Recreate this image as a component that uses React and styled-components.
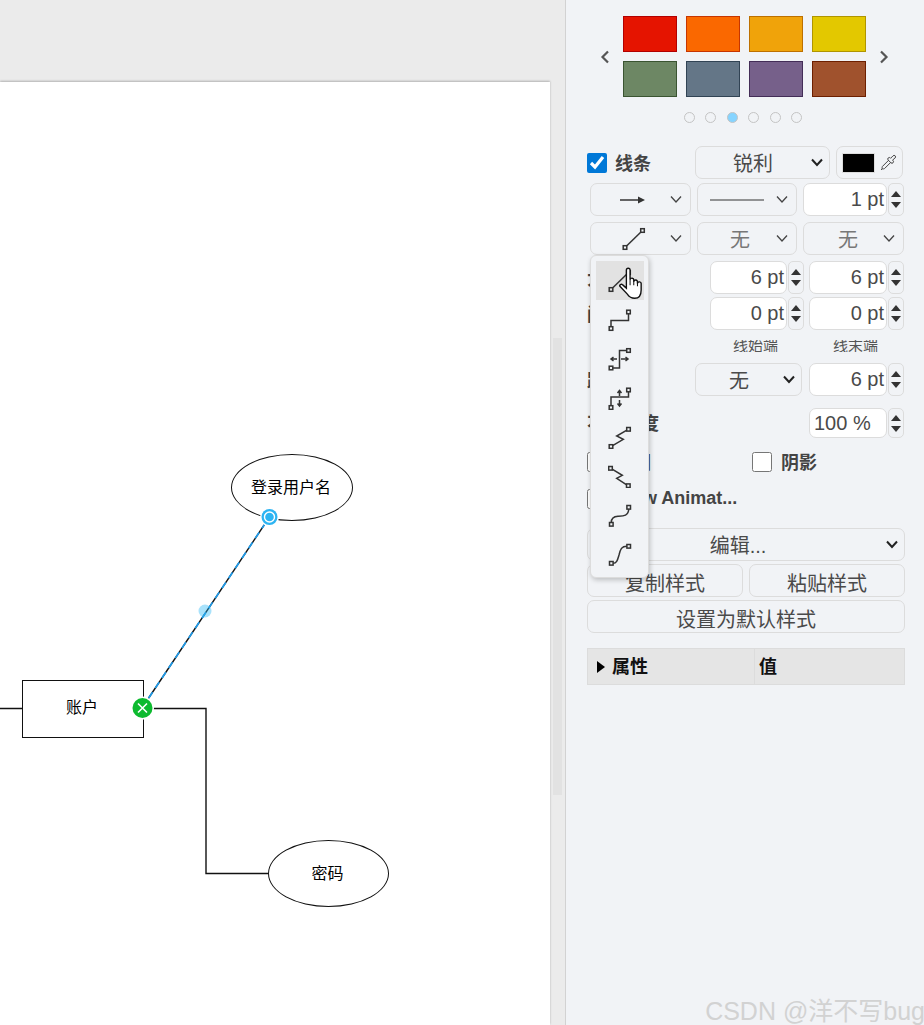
import React from 'react';
import styled, { createGlobalStyle } from 'styled-components';
import { Pipette } from 'lucide-react';

const GlobalStyle = createGlobalStyle`
  html, body {
    margin: 0;
    padding: 0;
    height: 100%;
    overflow: hidden;
    font-family: "Liberation Sans", "Noto Sans CJK SC", sans-serif;
  }
  #root { height: 100%; }
`;

const AppShell = styled.div`
  display: flex;
  width: 924px;
  height: 1025px;
  position: relative;
  overflow: hidden;
`;

/* left side: grey workspace + white page */
const Workspace = styled.div`
  position: relative;
  width: 566px;
  flex-shrink: 0;
  box-sizing: border-box;
  padding-top: 82px;
  padding-right: 15px;
  background: #ebebeb;
  border-right: 1px solid #d2d2d2;
`;

const Page = styled.div`
  position: relative;
  height: 943px;
  background: #fff;
  box-shadow: 0 -1px 2px rgba(0, 0, 0, 0.25);
`;

const ScrollThumb = styled.div`
  position: absolute;
  top: 338px;
  right: 3px;
  width: 9px;
  height: 457px;
  background: #e2e2e2;
`;

const Connectors = styled.svg`
  position: absolute;
  inset: 0;
  width: 550px;
  height: 943px;
`;

const Node = styled.div`
  position: absolute;
  box-sizing: border-box;
  left: ${p => p.$x}px;
  top: ${p => p.$y}px;
  width: ${p => p.$w}px;
  height: ${p => p.$h}px;
  padding: 0 2px ${p => (p.$round ? 4 : 6)}px 0;
  border: 1.5px solid #111;
  border-radius: ${p => (p.$round ? '50%' : '0')};
  background: #fff;
  display: flex;
  align-items: center;
  justify-content: center;
  font-size: 16px;
  color: #000;
`;

const Overlay = styled.svg`
  position: absolute;
  inset: 0;
  width: 550px;
  height: 943px;
`;

/* right side: format panel */
const Panel = styled.div`
  position: relative;
  flex: 1;
  box-sizing: border-box;
  padding: 16px 19px 0 21px;
  background: #f1f3f6;
  color: #4a4a4a;
  display: flex;
  flex-direction: column;
`;

const PaletteRow = styled.div`
  display: flex;
  align-items: center;
  justify-content: center;
  gap: 11px;
  margin-left: -4px;
`;

const NavButton = styled.svg`
  width: 14px;
  height: 16px;
  fill: none;
  stroke: #555;
  stroke-width: 2.2;
`;

const SwatchGrid = styled.div`
  display: grid;
  grid-template-columns: repeat(4, 54px);
  grid-auto-rows: 36px;
  gap: 9px;
`;

const Swatch = styled.div`
  box-sizing: border-box;
  background: ${p => p.$fill};
  border: 1px solid ${p => p.$line};
`;

const Dots = styled.div`
  display: flex;
  justify-content: center;
  gap: 10.6px;
  margin: 15px 6px 0 0;
`;

const Dot = styled.div`
  box-sizing: border-box;
  width: 11px;
  height: 11px;
  border-radius: 50%;
  border: 1px solid #c4c4c4;
  background: ${p => (p.$active ? '#86d4ff' : 'transparent')};
`;

const Row = styled.div`
  display: flex;
  align-items: center;
  gap: ${p => p.$gap ?? 6}px;
  height: ${p => p.$h ?? 33}px;
  margin-top: ${p => p.$mt}px;
  padding-left: ${p => p.$pl ?? 0}px;
  padding-right: ${p => p.$pr ?? 0}px;
`;

const Check = styled.input.attrs({ type: 'checkbox' })`
  width: 20px;
  height: 20px;
  margin: 0;
  flex-shrink: 0;
  accent-color: #0078d7;
`;

const BoldLabel = styled.span`
  font-size: 18px;
  font-weight: 700;
  color: #444;
  white-space: nowrap;
  padding-bottom: 2px;
  margin-left: ${p => p.$ml ?? 0}px;
  margin-right: ${p => p.$mr ?? 0}px;
`;

const RowLabel = styled(BoldLabel)`
  flex: 1;
`;

const Select = styled.div`
  box-sizing: border-box;
  width: ${p => (p.$w ? `${p.$w}px` : 'auto')};
  flex: ${p => (p.$w ? '0 0 auto' : '1')};
  height: 33px;
  display: flex;
  align-items: center;
  padding: 0 ${p => (p.$tight ? 5 : 7)}px 0 ${p => p.$shift ?? 0}px;
  border: 1px solid #dcdcdc;
  border-radius: 7px;
  font-size: 20px;
  color: ${p => (p.$dim ? '#777' : '#4a4a4a')};
`;

const SelectValue = styled.div`
  flex: 1;
  display: flex;
  align-items: center;
  justify-content: center;
`;

const Chevron = styled.svg`
  width: 14px;
  height: 9px;
  flex-shrink: 0;
  fill: none;
  stroke: ${p => (p.$bold ? '#222' : '#444')};
  stroke-width: ${p => (p.$bold ? 2 : 1.3)};
`;

const ColorButton = styled.div`
  box-sizing: border-box;
  width: 67px;
  height: 33px;
  margin-left: 6px;
  display: flex;
  align-items: center;
  gap: 5px;
  padding-left: 5px;
  border: 1px solid #dcdcdc;
  border-radius: 7px;
  color: #444;
`;

const ColorChip = styled.div`
  box-sizing: border-box;
  width: 33px;
  height: 20px;
  background: #000;
  border: 1px solid #ddd;
`;

const NumberField = styled.div`
  display: flex;
  height: ${p => p.$h ?? 33}px;
  gap: 1px;
  width: ${p => p.$w ?? 95}px;
`;

const NumberInput = styled.div`
  box-sizing: border-box;
  flex: 1;
  display: flex;
  align-items: center;
  justify-content: ${p => (p.$left ? 'flex-start' : 'flex-end')};
  padding: 0 2px 0 4px;
  background: #fff;
  border: 1px solid #dcdcdc;
  border-radius: 7px;
  font-size: 20px;
  color: #4a4a4a;
`;

const Spinner = styled.div`
  box-sizing: border-box;
  width: 16px;
  display: flex;
  flex-direction: column;
  align-items: center;
  justify-content: center;
  gap: 5px;
  border: 1px solid #dcdcdc;
  border-radius: 5px;
`;

const SpinArrow = styled.div`
  width: 0;
  height: 0;
  border-left: 5.5px solid transparent;
  border-right: 5.5px solid transparent;
  ${p => (p.$down ? 'border-top: 6px solid #333;' : 'border-bottom: 6px solid #333;')}
`;

const Caption = styled.div`
  width: 95px;
  height: 12px;
  line-height: 12px;
  overflow: hidden;
  font-size: 15px;
  text-align: center;
  padding-right: 2px;
  box-sizing: border-box;
  color: #555;
`;

const Spacer = styled.div`
  flex: 1;
`;

const WideButton = styled.div`
  box-sizing: border-box;
  flex: 1;
  height: 33px;
  display: flex;
  align-items: center;
  justify-content: center;
  border: 1px solid #dcdcdc;
  border-radius: 7px;
  font-size: 20px;
  padding-top: 3px;
  color: #4a4a4a;
`;

const TableHead = styled.div`
  display: grid;
  grid-template-columns: 166px 1fr;
  height: 37px;
  margin-top: 15px;
  box-sizing: border-box;
  background: #e5e5e5;
  border: 1px solid #dcdcdc;
  font-size: 18px;
  font-weight: 700;
  color: #111;
`;

const HeadCell = styled.div`
  display: flex;
  align-items: center;
  gap: 7px;
  padding-left: ${p => p.$pl}px;
  padding-bottom: 3px;
  border-left: ${p => (p.$divided ? '1px solid #dcdcdc' : 'none')};
`;

const Caret = styled.div`
  width: 0;
  height: 0;
  margin-top: 3px;
  border-top: 6px solid transparent;
  border-bottom: 6px solid transparent;
  border-left: 8px solid #000;
`;

/* edge style popup */
const Popup = styled.div`
  position: absolute;
  left: 24px;
  top: 255px;
  width: 59px;
  height: 323px;
  box-sizing: border-box;
  padding: 5px 5px;
  background: #f1f3f6;
  border: 1px solid #dcdcdc;
  border-radius: 6px;
  box-shadow: 1px 2px 5px rgba(0, 0, 0, 0.22);
`;

const PopupItem = styled.div`
  height: 39px;
  width: 48px;
  display: flex;
  align-items: center;
  justify-content: center;
  background: ${p => (p.$hover ? '#e2e2e2' : 'transparent')};
`;

const EdgeIcon = styled.svg`
  width: 24px;
  height: 24px;
  fill: none;
  stroke: #333;
  stroke-width: 1.5;
`;

const HandCursor = styled.svg`
  position: absolute;
  left: 28px;
  top: 10px;
  width: 24px;
  height: 35px;
`;

const Watermark = styled.div`
  position: absolute;
  right: -1px;
  bottom: 0;
  font-size: 25px;
  line-height: 28px;
  color: #d2d2d2;
  white-space: nowrap;
`;

const swatches = [
  ['#e51400', '#b20000'],
  ['#fa6800', '#c73500'],
  ['#f0a30a', '#bd7000'],
  ['#e3c800', '#b09500'],
  ['#6d8764', '#3a5431'],
  ['#647687', '#314354'],
  ['#76608a', '#432d57'],
  ['#a0522d', '#6d1f00'],
];

const Ends = ({ a, b }) => (
  <>
    <rect x={a[0] - 1.8} y={a[1] - 1.8} width="3.6" height="3.6" />
    <rect x={b[0] - 1.8} y={b[1] - 1.8} width="3.6" height="3.6" />
  </>
);

const Arrows = ({ vertical }) =>
  vertical ? (
    <path d="M11.5 10V5M9.5 7l2-2.5 2 2.5M11.5 14v6M9.5 17.5l2 2.5 2-2.5" />
  ) : (
    <path d="M3 12h6M5.5 10l-2.5 2 2.5 2M13 12h7M17.5 10l2.5 2-2.5 2" />
  );

const edgeIcons = [
  <><Ends a={[3, 20.5]} b={[20.5, 3.5]} /><path d="M4.8 18.7L18.7 5.3" /></>,
  <><Ends a={[3, 20.5]} b={[20.5, 4]} /><path d="M3 18.7V12.5H20.5V5.8" /></>,
  <><Ends a={[3, 21]} b={[20.5, 3.5]} /><path d="M4.8 21H11.5V3.5H18.7" /><Arrows /></>,
  <><Ends a={[3, 21.5]} b={[20.5, 4]} /><path d="M3 19.7V11H20.5V5.8" /><Arrows vertical /></>,
  <><Ends a={[3, 21.5]} b={[20.5, 4.3]} /><path d="M4.6 20.6L15.3 14.3L8.7 11L18.9 5.2" /></>,
  <><Ends a={[2.5, 4.3]} b={[20.3, 21.7]} /><path d="M4.1 5.2L14.3 11.3L8.7 14.3L18.7 20.8" /></>,
  <><Ends a={[3.3, 21.3]} b={[20.7, 4.3]} /><path d="M3.3 19.5C3.3 15 6 13.5 10 13.3C15 13 20.7 13 20.7 6.1" /></>,
  <><Ends a={[3.3, 21.3]} b={[20.7, 4.3]} /><path d="M5.1 21.3C9 21.3 9.5 18 11 13C12.5 7 13.5 4.3 18.9 4.3" /></>,
];

const ChevronDown = ({ bold }) => (
  <Chevron viewBox="0 0 14 9" $bold={bold}>
    <path d="M2 1.5L7 7L12 1.5" />
  </Chevron>
);

const Stepper = ({ value, left, h, w }) => (
  <NumberField $h={h} $w={w}>
    <NumberInput $left={left}>{value}</NumberInput>
    <Spinner>
      <SpinArrow />
      <SpinArrow $down />
    </Spinner>
  </NumberField>
);

const App = () => (
  <>
    <GlobalStyle />
    <AppShell>
      <Workspace>
        <Page>
          <Connectors viewBox="0 82 550 943">
            <path d="M0 708.5H22M144 708.5H206V873.5H268" fill="none" stroke="#111" strokeWidth="1.4" />
          </Connectors>
          <Node $x={22} $y={598} $w={122} $h={58}>账户</Node>
          <Node $x={231} $y={372} $w={122} $h={67} $round>登录用户名</Node>
          <Node $x={268} $y={758} $w={121} $h={67} $round>密码</Node>
          <Overlay viewBox="0 82 550 943">
            <path d="M142 708L269.5 517" stroke="#111" strokeWidth="1.4" />
            <path d="M142 708L269.5 517" stroke="#1e9bea" strokeWidth="1.7" strokeDasharray="7 5" />
            <circle cx="205" cy="611" r="6.5" fill="#29b6f6" opacity="0.4" />
            <circle cx="269.5" cy="517" r="9.5" fill="#fff" />
            <circle cx="269.5" cy="517" r="8" fill="#2db4f2" />
            <circle cx="269.5" cy="517" r="5" fill="none" stroke="#fff" strokeWidth="1.4" />
            <circle cx="142.5" cy="708" r="11.5" fill="#fff" />
            <circle cx="142.5" cy="708" r="10" fill="#0dba2f" />
            <path d="M138 703.5l9 9M147 703.5l-9 9" stroke="#fff" strokeWidth="1.6" />
          </Overlay>
        </Page>
        <ScrollThumb />
      </Workspace>

      <Panel>
        <PaletteRow>
          <NavButton viewBox="0 0 14 16"><path d="M10 2.5L4.5 8L10 13.5" /></NavButton>
          <SwatchGrid>
            {swatches.map(([fill, line]) => (
              <Swatch key={fill} $fill={fill} $line={line} />
            ))}
          </SwatchGrid>
          <NavButton viewBox="0 0 14 16"><path d="M4 2.5L9.5 8L4 13.5" /></NavButton>
        </PaletteRow>
        <Dots>
          {[0, 1, 2, 3, 4, 5].map(i => (
            <Dot key={i} $active={i === 2} />
          ))}
        </Dots>

        <Row $mt={23} $gap={0} $pr={2}>
          <Check defaultChecked />
          <RowLabel $ml={8}>线条</RowLabel>
          <Select $w={135} $tight>
            <SelectValue>锐利</SelectValue>
            <ChevronDown bold />
          </Select>
          <ColorButton>
            <ColorChip />
            <Pipette size={17} strokeWidth={1.4} />
          </ColorButton>
        </Row>

        <Row $mt={4} $pl={3} $pr={1}>
          <Select $w={101} $shift={6}>
            <SelectValue>
              <svg width="26" height="10" viewBox="0 0 26 10">
                <path d="M0 5H19" stroke="#333" strokeWidth="1.5" />
                <path d="M18 1.5L25 5L18 8.5Z" fill="#333" />
              </svg>
            </SelectValue>
            <ChevronDown />
          </Select>
          <Select $w={100}>
            <SelectValue>
              <svg width="56" height="4" viewBox="0 0 56 4">
                <path d="M1 2H55" stroke="#333" strokeWidth="1" />
              </svg>
            </SelectValue>
            <ChevronDown />
          </Select>
          <Stepper value="1 pt" w={101} />
        </Row>

        <Row $mt={6} $pl={3} $pr={1}>
          <Select $w={101} $shift={8}>
            <SelectValue>
              <EdgeIcon viewBox="0 0 24 24">
                <Ends a={[3, 20.5]} b={[20.5, 3.5]} />
                <path d="M4.8 18.7L18.7 5.3" />
              </EdgeIcon>
            </SelectValue>
            <ChevronDown />
          </Select>
          <Select $w={100} $dim $shift={7}>
            <SelectValue>无</SelectValue>
            <ChevronDown />
          </Select>
          <Select $w={101} $dim $shift={10}>
            <SelectValue>无</SelectValue>
            <ChevronDown />
          </Select>
        </Row>

        <Row $mt={6} $gap={5} $pr={1}>
          <RowLabel>大小</RowLabel>
          <Stepper value="6 pt" w={94} />
          <Stepper value="6 pt" />
        </Row>

        <Row $mt={3} $gap={5} $pr={1}>
          <RowLabel>间距</RowLabel>
          <Stepper value="0 pt" w={94} />
          <Stepper value="0 pt" />
        </Row>

        <Row $mt={10} $h={12} $gap={5} $pr={1}>
          <Spacer />
          <Caption>线始端</Caption>
          <Caption>线末端</Caption>
        </Row>

        <Row $mt={11} $gap={7} $pr={1}>
          <RowLabel>跳转</RowLabel>
          <Select $w={107} $tight>
            <SelectValue>无</SelectValue>
            <ChevronDown bold />
          </Select>
          <Stepper value="6 pt" />
        </Row>

        <Row $mt={12} $h={30} $gap={5} $pr={1}>
          <RowLabel>不透明度</RowLabel>
          <Stepper value="100 %" left h={30} />
        </Row>

        <Row $mt={14} $h={20} $gap={0}>
          <Check />
          <BoldLabel $ml={8} $mr={101}>草图</BoldLabel>
          <Check />
          <BoldLabel $ml={9}>阴影</BoldLabel>
        </Row>

        <Row $mt={17} $h={20} $gap={0}>
          <Check />
          <BoldLabel $ml={9}>Flow Animat...</BoldLabel>
        </Row>

        <Row $mt={19}>
          <Select $tight $shift={3}>
            <SelectValue>编辑...</SelectValue>
            <ChevronDown bold />
          </Select>
        </Row>

        <Row $mt={3}>
          <WideButton>复制样式</WideButton>
          <WideButton>粘贴样式</WideButton>
        </Row>

        <Row $mt={3}>
          <WideButton>设置为默认样式</WideButton>
        </Row>

        <TableHead>
          <HeadCell $pl={9}><Caret />属性</HeadCell>
          <HeadCell $pl={4} $divided>值</HeadCell>
        </TableHead>

        <Popup>
          {edgeIcons.map((icon, i) => (
            <PopupItem key={i} $hover={i === 0}>
              <EdgeIcon viewBox="0 0 24 24">{icon}</EdgeIcon>
            </PopupItem>
          ))}
          <HandCursor viewBox="0 0 26 36">
            <path
              d="M8 19V3.5a2 2 0 0 1 4 0V14a2 2 0 0 1 4 .5V16a2 2 0 0 1 4 .5V18a2 2 0 0 1 4 .5V25c0 5.5-2.5 9-7 9c-4 0-6-1.5-8-4.5L1 21c-1-1.5 1.5-3 3-1.5L8 23Z"
              fill="#fff"
              stroke="#111"
              strokeWidth="1.5"
            />
            <path d="M12 14v6M16 15v5M20 17v4" stroke="#111" strokeWidth="1.1" fill="none" />
          </HandCursor>
        </Popup>

        <Watermark>CSDN @洋不写bug</Watermark>
      </Panel>
    </AppShell>
  </>
);

export default App;
